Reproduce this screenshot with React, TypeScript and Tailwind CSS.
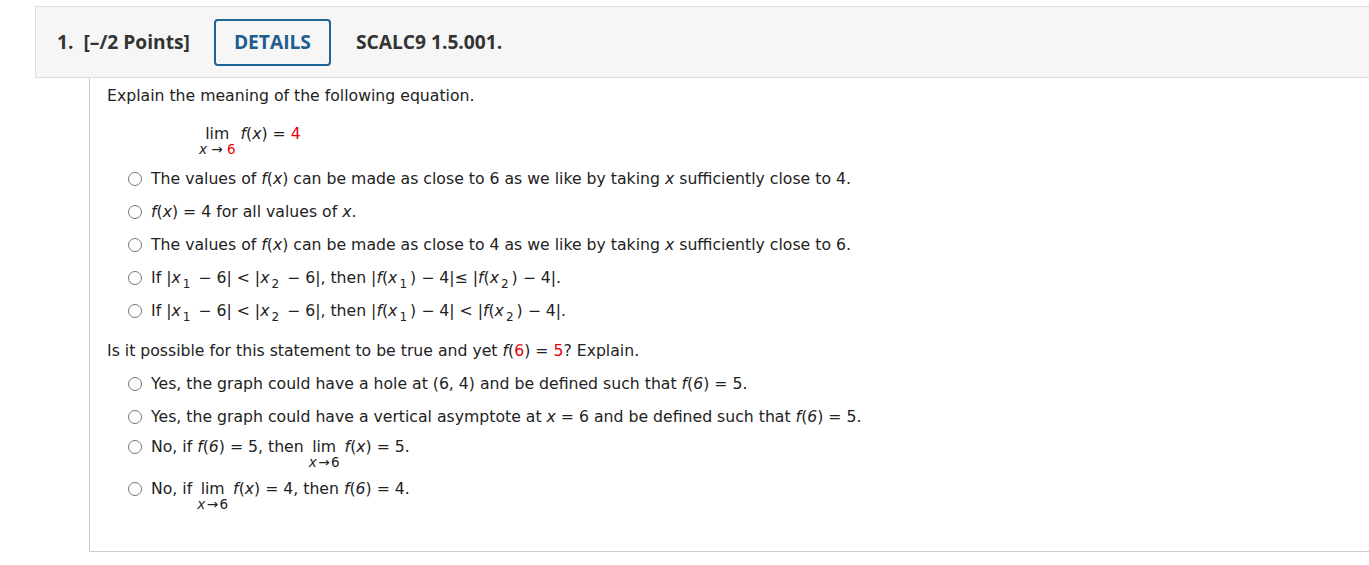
import type { ReactNode } from 'react';

const RED = 'text-[#e8000b]';

function F({ children = 'x' }: { children?: ReactNode }) {
  return (
    <>
      <i>f</i>({typeof children === 'string' ? <i>{children}</i> : children})
    </>
  );
}

function Sub({ children }: { children: ReactNode }) {
  return (
    <sub className="relative top-[5px] mr-[3px] ml-[2px] align-baseline text-[12px] leading-none">{children}</sub>
  );
}

function X({ n }: { n: string }) {
  return (
    <>
      <i>x</i>
      <Sub>{n}</Sub>
    </>
  );
}

function Lim({ spaced, red }: { spaced?: boolean; red?: boolean }) {
  return (
    <span className="inline-flex flex-col items-center align-baseline">
      <span>lim</span>
      <span className="text-[13.5px] leading-[12px] whitespace-pre">
        <i>x</i>
        {spaced ? ' \u2192 ' : <span className="mx-[1.5px]">{'\u2192'}</span>}
        <span className={red ? RED : ''}>6</span>
      </span>
    </span>
  );
}

function Option({ children, lim }: { children: ReactNode; lim?: boolean }) {
  return (
    <div className={`flex items-start ${lim ? 'pt-[4px] pb-[7px]' : 'py-[7px]'}`}>
      <span className="mt-[2.5px] mr-[9px] h-[14px] w-[14px] shrink-0 rounded-full border border-[#767676] bg-white" />
      <span className="leading-[19px]">{children}</span>
    </div>
  );
}

export default function App() {
  return (
    <div className="w-full overflow-hidden bg-white pt-[6px] pb-[14px]">
      <div className="ml-[35px] w-[1400px]">
        {/* Header */}
        <div
          className="flex h-[72px] items-center border border-[#dddddd] bg-[#f6f6f6] pl-[21px] text-[19.2px] font-bold text-[#333333]"
          style={{ fontFamily: '"Open Sans", "Liberation Sans", sans-serif' }}
        >
          <span>1.</span>
          <span className="ml-[10px]">[–/2 Points]</span>
          <span className="ml-[24px] flex h-[47px] w-[117px] items-center justify-center rounded-[4px] border-2 border-[#1f6395] text-[#1f5d8d]">
            DETAILS
          </span>
          <span className="ml-[25px]">SCALC9 1.5.001.</span>
        </div>

        {/* Body */}
        <div
          className="ml-[54px] border-b border-l border-[#cccccc] pt-[8px] pb-[34px] pl-[17px] text-[15.7px] text-[#222222]"
          style={{ fontFamily: 'Verdana, "DejaVu Sans", sans-serif' }}
        >
          <p className="leading-[19px]">Explain the meaning of the following equation.</p>

          <div className="mt-[19px] ml-[92px] leading-[19px]">
            <Lim spaced red />
            <span className="ml-[5px]">
              <F /> = <span className={RED}>4</span>
            </span>
          </div>

          <div className="mt-[7px] ml-[21px]">
            <Option>
              The values of <F /> can be made as close to 6 as we like by taking <i>x</i> sufficiently close to 4.
            </Option>
            <Option>
              <F /> = 4 for all values of <i>x</i>.
            </Option>
            <Option>
              The values of <F /> can be made as close to 4 as we like by taking <i>x</i> sufficiently close to 6.
            </Option>
            <Option>
              If |<X n="1" /> − 6| &lt; |<X n="2" /> − 6|, then |
              <F>
                <X n="1" />
              </F>{' '}
              − 4|≤ |
              <F>
                <X n="2" />
              </F>{' '}
              − 4|.
            </Option>
            <Option>
              If |<X n="1" /> − 6| &lt; |<X n="2" /> − 6|, then |
              <F>
                <X n="1" />
              </F>{' '}
              − 4| &lt; |
              <F>
                <X n="2" />
              </F>{' '}
              − 4|.
            </Option>
          </div>

          <p className="mt-[14px] leading-[19px]">
            Is it possible for this statement to be true and yet <i>f</i>(<span className={RED}>6</span>) ={' '}
            <span className={RED}>5</span>? Explain.
          </p>

          <div className="mt-[7px] ml-[21px]">
            <Option>
              Yes, the graph could have a hole at (6, 4) and be defined such that <F>6</F> = 5.
            </Option>
            <Option>
              Yes, the graph could have a vertical asymptote at <i>x</i> = 6 and be defined such that <F>6</F> = 5.
            </Option>
            <Option lim>
              No, if <F>6</F> = 5, then <Lim />
              <span className="ml-[5px]">
                <F /> = 5.
              </span>
            </Option>
            <Option lim>
              No, if <Lim />
              <span className="ml-[5px]">
                <F /> = 4, then <F>6</F> = 4.
              </span>
            </Option>
          </div>
        </div>
      </div>
    </div>
  );
}
